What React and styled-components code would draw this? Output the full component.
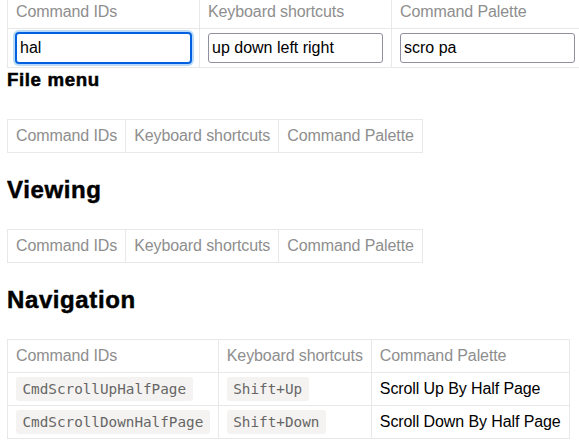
import React from "react";
import styled, { createGlobalStyle } from "styled-components";

const GlobalStyle = createGlobalStyle`
  html, body {
    margin: 0;
    padding: 0;
    overflow: hidden;
    background: #fff;
  }
  body {
    font-family: "Liberation Sans", Arial, sans-serif;
    font-size: 16px;
    color: #000;
  }
`;

const Page = styled.div`
  padding: 0 7px;
`;

const Table = styled.table`
  border-collapse: collapse;
  table-layout: ${(p) => (p.$fixed ? "fixed" : "auto")};
  width: ${(p) => (p.$fixed ? "577px" : "auto")};
`;

const Th = styled.th`
  border: 1px solid #e8e8e8;
  border-top: ${(p) => (p.$noTop ? "none" : "1px solid #e8e8e8")};
  padding: ${(p) => (p.$noTop ? "2px 8px 6px" : "6px 8px")};
  line-height: 20px;
  font-weight: normal;
  text-align: left;
  color: #8e8e8e;
  letter-spacing: -0.1px;
  white-space: nowrap;
`;

const Td = styled.td`
  border: 1px solid #e8e8e8;
  padding: 4px 8px;
  line-height: 24px;
  vertical-align: middle;
  letter-spacing: -0.1px;
  white-space: nowrap;
`;

const FilterInput = styled.input`
  box-sizing: border-box;
  display: block;
  width: 100%;
  height: 30px;
  margin: 0;
  padding: 0 3px;
  font-family: "Liberation Sans", Arial, sans-serif;
  font-size: 16px;
  color: #000;
  border: 1px solid ${(p) => (p.$focused ? "#0060df" : "#8f8f9d")};
  border-radius: 3px;
  outline: none;
  box-shadow: ${(p) =>
    p.$focused ? "0 0 0 1px #0060df, 0 0 0 3px #b9dbf8" : "none"};
`;

const H3 = styled.h3`
  margin: 1px 0 28px;
  font-size: 18.72px;
  line-height: 22px;
  font-weight: bold;
  letter-spacing: 0.6px;
  -webkit-text-stroke: 0.5px #000;
`;

const H2 = styled.h2`
  margin: 23px 0 25px;
  font-size: 24px;
  line-height: 28px;
  font-weight: bold;
  letter-spacing: 0.6px;
  -webkit-text-stroke: 0.5px #000;
`;

const Code = styled.code`
  display: inline-block;
  padding: 3px 6.5px;
  line-height: 18px;
  border-radius: 3px;
  background: #f5f3f1;
  color: #666;
  font-family: "DejaVu Sans Mono", monospace;
  font-size: 14.3px;
  letter-spacing: 0;
  vertical-align: top;
`;

const columns = ["Command IDs", "Keyboard shortcuts", "Command Palette"];

function HeaderRow({ noTop }) {
  return (
    <tr>
      {columns.map((c) => (
        <Th key={c} $noTop={noTop}>
          {c}
        </Th>
      ))}
    </tr>
  );
}

function Section({ rows }) {
  return (
    <Table>
      <thead>
        <HeaderRow />
      </thead>
      {rows.length > 0 && (
        <tbody>
          {rows.map((r) => (
            <tr key={r.id}>
              <Td>
                <Code>{r.id}</Code>
              </Td>
              <Td>
                <Code>{r.keys}</Code>
              </Td>
              <Td>{r.name}</Td>
            </tr>
          ))}
        </tbody>
      )}
    </Table>
  );
}

const navigation = [
  { id: "CmdScrollUpHalfPage", keys: "Shift+Up", name: "Scroll Up By Half Page" },
  { id: "CmdScrollDownHalfPage", keys: "Shift+Down", name: "Scroll Down By Half Page" },
];

export default function App() {
  return (
    <Page>
      <GlobalStyle />
      <Table $fixed>
        <thead>
          <HeaderRow noTop />
        </thead>
        <tbody>
          <tr>
            <Td>
              <FilterInput $focused defaultValue="hal" />
            </Td>
            <Td>
              <FilterInput defaultValue="up down left right" />
            </Td>
            <Td>
              <FilterInput defaultValue="scro pa" />
            </Td>
          </tr>
        </tbody>
      </Table>
      <H3>File menu</H3>
      <Section rows={[]} />
      <H2>Viewing</H2>
      <Section rows={[]} />
      <H2>Navigation</H2>
      <Section rows={navigation} />
    </Page>
  );
}
